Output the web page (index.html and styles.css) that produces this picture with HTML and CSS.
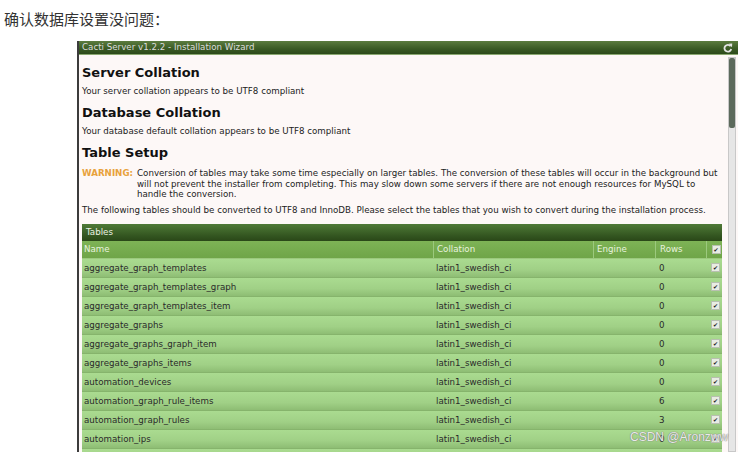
FILE: index.html
```html
<!DOCTYPE html>
<html>
<head>
<meta charset="utf-8">
<link rel="stylesheet" href="styles.css">
</head>
<body>
<p class="intro">确认数据库设置没问题：</p>
<div class="window">
  <div class="titlebar">
    <span class="title">Cacti Server v1.2.2 - Installation Wizard</span>
    <svg class="refresh" width="10" height="10" viewBox="0 0 10 10"><path d="M7.6 3.2A3.4 3.4 0 1 0 8.2 6" fill="none" stroke="#e4e4e4" stroke-width="1.8"/><path d="M5.6 0.8L9.2 0.6L9 4.2Z" fill="#e4e4e4"/></svg>
  </div>
  <div class="wbody">
    <div class="content">
      <h2 class="h first">Server Collation</h2>
      <p class="p">Your server collation appears to be UTF8 compliant</p>
      <h2 class="h">Database Collation</h2>
      <p class="p">Your database default collation appears to be UTF8 compliant</p>
      <h2 class="h">Table Setup</h2>
      <div class="warning">
        <span class="wlabel">WARNING:</span>
        <span class="wtext">Conversion of tables may take some time especially on larger tables. The conversion of these tables will occur in the background but will not prevent the installer from completing. This may slow down some servers if there are not enough resources for MySQL to handle the conversion.</span>
      </div>
      <p class="p">The following tables should be converted to UTF8 and InnoDB. Please select the tables that you wish to convert during the installation process.</p>
      <div class="tables">
        <div class="tbar">Tables</div>
        <div class="row head">
          <span class="c name">Name</span><span class="c coll">Collation</span><span class="c eng">Engine</span><span class="c rows">Rows</span><span class="c chk"><span class="cb">&#10004;</span></span>
        </div>
        <div class="row"><span class="c name">aggregate_graph_templates</span><span class="c coll">latin1_swedish_ci</span><span class="c eng"></span><span class="c rows">0</span><span class="c chk"><span class="cb">&#10004;</span></span></div>
        <div class="row"><span class="c name">aggregate_graph_templates_graph</span><span class="c coll">latin1_swedish_ci</span><span class="c eng"></span><span class="c rows">0</span><span class="c chk"><span class="cb">&#10004;</span></span></div>
        <div class="row"><span class="c name">aggregate_graph_templates_item</span><span class="c coll">latin1_swedish_ci</span><span class="c eng"></span><span class="c rows">0</span><span class="c chk"><span class="cb">&#10004;</span></span></div>
        <div class="row"><span class="c name">aggregate_graphs</span><span class="c coll">latin1_swedish_ci</span><span class="c eng"></span><span class="c rows">0</span><span class="c chk"><span class="cb">&#10004;</span></span></div>
        <div class="row"><span class="c name">aggregate_graphs_graph_item</span><span class="c coll">latin1_swedish_ci</span><span class="c eng"></span><span class="c rows">0</span><span class="c chk"><span class="cb">&#10004;</span></span></div>
        <div class="row"><span class="c name">aggregate_graphs_items</span><span class="c coll">latin1_swedish_ci</span><span class="c eng"></span><span class="c rows">0</span><span class="c chk"><span class="cb">&#10004;</span></span></div>
        <div class="row"><span class="c name">automation_devices</span><span class="c coll">latin1_swedish_ci</span><span class="c eng"></span><span class="c rows">0</span><span class="c chk"><span class="cb">&#10004;</span></span></div>
        <div class="row"><span class="c name">automation_graph_rule_items</span><span class="c coll">latin1_swedish_ci</span><span class="c eng"></span><span class="c rows">6</span><span class="c chk"><span class="cb">&#10004;</span></span></div>
        <div class="row"><span class="c name">automation_graph_rules</span><span class="c coll">latin1_swedish_ci</span><span class="c eng"></span><span class="c rows">3</span><span class="c chk"><span class="cb">&#10004;</span></span></div>
        <div class="row"><span class="c name">automation_ips</span><span class="c coll">latin1_swedish_ci</span><span class="c eng"></span><span class="c rows">0</span><span class="c chk"><span class="cb">&#10004;</span></span></div>
        <div class="row"><span class="c name">automation_networks</span><span class="c coll">latin1_swedish_ci</span><span class="c eng"></span><span class="c rows">0</span><span class="c chk"><span class="cb">&#10004;</span></span></div>
      </div>
    </div>
    <div class="scrollbar"><div class="thumb"></div></div>
  </div>
  <div class="watermark">CSDN @Aronzww</div>
</div>
</body>
</html>
```
FILE: styles.css
```css
html, body {
  margin: 0;
  padding: 0;
  background: #fff;
  overflow: hidden;
}
body {
  width: 739px;
  height: 452px;
}
.intro {
  margin: 0;
  padding: 9px 0 0 4px;
  height: 32px;
  box-sizing: border-box;
  font-family: "Noto Sans CJK SC", sans-serif;
  font-size: 15px;
  line-height: 20px;
  color: #333;
}
.window {
  position: relative;
  margin: 9px 1px 0 77px;
  height: 411px;
  border-left: 2px solid #3c3c3c;
  display: flex;
  flex-direction: column;
  font-family: "DejaVu Sans", sans-serif;
  overflow: hidden;
}
.titlebar {
  height: 13px;
  flex: none;
  display: flex;
  align-items: center;
  justify-content: space-between;
  padding: 0 5px 0 3px;
  background: linear-gradient(#5b7c3e, #3a5a24 60%, #2d4a1b);
  border-bottom: 1px solid #8aa870;
}
.title {
  font-size: 8.7px;
  color: #dcdcdc;
  line-height: 13px;
}
.refresh {
  display: block;
}
.wbody {
  flex: 1;
  display: flex;
  background: #fdf8f7;
  min-height: 0;
}
.content {
  flex: 1;
  padding: 10px 4px 0 3px;
  color: #222;
  font-size: 8.7px;
}
.h {
  margin: 0 0 5px;
  font-size: 13px;
  line-height: 16px;
  font-weight: bold;
  color: #111;
}
.p {
  margin: 0 0 8px;
  line-height: 11px;
}
.warning {
  display: flex;
  margin: 7px 0 5px;
  line-height: 10.5px;
}
.wlabel {
  flex: none;
  width: 55px;
  font-weight: bold;
  color: #e8a23c;
}
.wtext {
  flex: 1;
}
.tables {
  margin-top: 8px;
}
.tbar {
  height: 17px;
  line-height: 17px;
  padding-left: 4px;
  color: #eaf0e2;
  background: linear-gradient(#4f7a37, #335520 70%, #2a4718);
}
.row {
  display: flex;
  height: 19px;
  line-height: 18px;
  background: linear-gradient(#aadb90, #a0d086 60%, #8ebd74);
  border-bottom: 1px solid #86b46c;
  box-sizing: border-box;
  color: #2a2a2a;
}
.row.head {
  height: 18px;
  line-height: 17px;
  background: linear-gradient(#7eb356, #6fa548);
  border-bottom: 1px solid #9cc97e;
  color: #e8f2de;
}
.c {
  display: block;
  padding-left: 3px;
  box-sizing: border-box;
  white-space: nowrap;
  overflow: hidden;
}
.head .c + .c {
  border-left: 1px solid #9cc97e;
}
.name { width: 351px; padding-left: 2px; }
.coll { width: 160px; }
.eng { width: 62px; }
.rows { width: 51px; padding-left: 4px; }
.chk {
  flex: 1;
  display: flex;
  align-items: center;
  justify-content: center;
}
.cb {
  display: block;
  width: 7px;
  height: 7px;
  background: #e8ece4;
  border: 1px solid #b8c0b0;
  font-size: 6px;
  line-height: 7px;
  text-align: center;
  color: #222;
}
.scrollbar {
  flex: none;
  width: 8px;
  margin: 2px 2px 0 2px;
  background: #e6e6e6;
  border: 1px solid #c8c8c8;
  box-sizing: border-box;
}
.thumb {
  height: 70px;
  background: #5c6a5c;
  border-radius: 2px;
}
.watermark {
  position: absolute;
  left: 551px;
  top: 389px;
  font-family: "Liberation Sans", sans-serif;
  font-size: 12px;
  color: rgba(255, 255, 255, 0.85);
  text-shadow: 0 0 1px #777, 0 0 1px #777;
}
```
